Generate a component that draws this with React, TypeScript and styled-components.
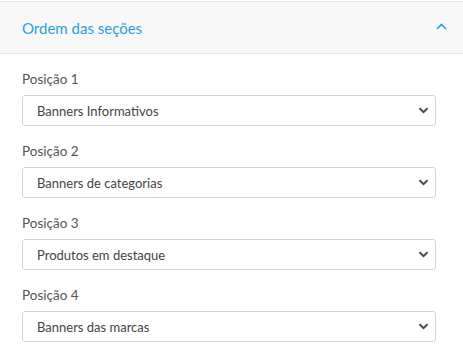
import * as React from 'react'
import styled, { createGlobalStyle } from 'styled-components'

const GlobalStyle = createGlobalStyle`
  html, body { margin: 0; padding: 0; background: #fff; }
  body { font-family: Lato, "Open Sans", Arial, sans-serif; }
`

const positions = [
  { id: 1, value: 'Banners Informativos' },
  { id: 2, value: 'Banners de categorias' },
  { id: 3, value: 'Produtos em destaque' },
  { id: 4, value: 'Banners das marcas' },
]

const options = ['Banners Informativos', 'Banners de categorias', 'Produtos em destaque', 'Banners das marcas']

const ChevronUp = () => (
  <svg width="11" height="7" viewBox="0 0 11 7" fill="none">
    <path d="M1 6 L5.5 1.5 L10 6" stroke="#2a9fe0" strokeWidth="1.6" />
  </svg>
)

const ChevronDown = () => (
  <svg width="11" height="7" viewBox="0 0 11 7" fill="none">
    <path d="M1.5 1.3 L5.5 5.1 L9.5 1.3" stroke="#4a4a4a" strokeWidth="2" />
  </svg>
)

export default function App() {
  return (
    <Panel>
      <GlobalStyle />
      <Header>
        <Title>Ordem das seções</Title>
        <Toggle><ChevronUp /></Toggle>
      </Header>
      <Body>
        {positions.map(p => (
          <Group key={p.id}>
            <Label htmlFor={`pos-${p.id}`}>Posição {p.id}</Label>
            <SelectWrap>
              <Select id={`pos-${p.id}`} defaultValue={p.value}>
                {options.map(o => <option key={o} value={o}>{o}</option>)}
              </Select>
              <Arrow><ChevronDown /></Arrow>
            </SelectWrap>
          </Group>
        ))}
      </Body>
    </Panel>
  )
}

const Panel = styled.div`
  width: 463px;
  padding-top: 1px;
`

const Header = styled.div`
  display: flex;
  align-items: center;
  justify-content: space-between;
  height: 51px;
  padding: 0 16px 0 22px;
  background: #f8f8f8;
  border-top: 1px solid #e6e6e6;
  border-bottom: 1px solid #e6e6e6;
`

const Title = styled.span`
  font-size: 15px;
  color: #2a9fe0;
`

const Toggle = styled.span`
  display: flex;
  align-items: center;
  margin-top: -3px;
`

const Body = styled.div`
  display: flex;
  flex-direction: column;
  gap: 16px;
  padding: 16px 27px 0 22px;
`

const Group = styled.div`
  display: flex;
  flex-direction: column;
`

const Label = styled.label`
  font-size: 13.5px;
  line-height: 18px;
  color: #555;
  margin-bottom: 7px;
`

const SelectWrap = styled.div`
  position: relative;
`

const Select = styled.select`
  width: 100%;
  height: 31px;
  padding: 0 30px 0 14px;
  appearance: none;
  border: 1px solid #d4d4d4;
  border-radius: 3px;
  background: #fff;
  font-family: Lato, "Open Sans", Arial, sans-serif;
  font-size: 13px;
  color: #444;
  outline: none;
`

const Arrow = styled.span`
  position: absolute;
  right: 7px;
  top: 12px;
  display: flex;
  pointer-events: none;
`
